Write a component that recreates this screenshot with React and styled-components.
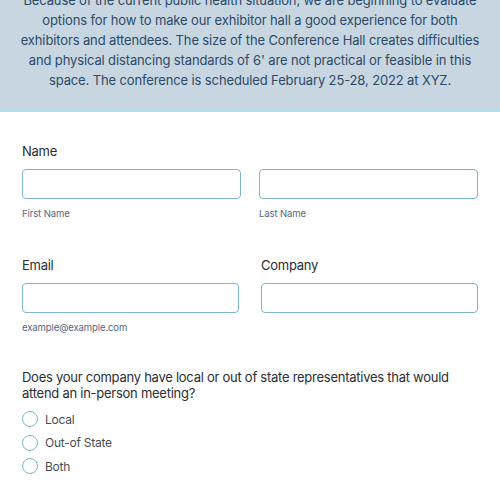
import React from "react";
import styled, { createGlobalStyle } from "styled-components";

const GlobalStyle = createGlobalStyle`
  * {
    box-sizing: border-box;
  }
  body {
    margin: 0;
    background: #ffffff;
    font-family: "Inter", "Noto Sans", sans-serif;
    overflow: hidden;
  }
`;

const Page = styled.div`
  width: 500px;
  height: 484px;
  overflow: hidden;
  background: #ffffff;
`;

/* page is scrolled a bit, so the intro starts above the viewport */
const Intro = styled.header`
  margin-top: -40px;
  padding: 30px 20px 20px;
  background: #c8d6e1;
  border-bottom: 2px solid #b3dcec;
`;

const IntroText = styled.p`
  margin: 0;
  text-align: center;
  font-size: 13px;
  line-height: 20px;
  letter-spacing: -0.01em;
  color: #2c4a68;
`;

const Form = styled.form`
  padding: 29px 22px 0;
  display: flex;
  flex-direction: column;
`;

const Row = styled.div`
  display: grid;
  grid-template-columns: 1fr 1fr;
  column-gap: ${(p) => p.$gap || 18}px;
  margin-bottom: ${(p) => p.$bottom || 0}px;
`;

const Field = styled.div`
  display: flex;
  flex-direction: column;
`;

const Label = styled.label`
  font-size: 13px;
  line-height: 20px;
  height: 20px;
  letter-spacing: -0.02em;
  color: #2a2d33;
  margin-bottom: 8px;
`;

const Input = styled.input`
  height: 30px;
  width: 100%;
  border: 1.5px solid #7db8ca;
  border-radius: 4px;
  background: #ffffff;
  outline: none;
  font-family: inherit;
`;

const SubLabel = styled.span`
  margin-top: 8px;
  font-size: 9.5px;
  line-height: 14px;
  height: 14px;
  letter-spacing: -0.01em;
  color: #526687;
`;

const Question = styled.p`
  margin: 34px 0 10px;
  font-size: 13px;
  line-height: 16px;
  letter-spacing: -0.02em;
  color: #2a2d33;
  max-width: 440px;
`;

const Options = styled.div`
  display: flex;
  flex-direction: column;
  gap: 7.5px;
`;

const Option = styled.label`
  display: flex;
  align-items: center;
  gap: 7px;
  height: 16px;
  font-size: 12px;
  letter-spacing: -0.02em;
  color: #4a4d52;
`;

const Radio = styled.span`
  width: 16px;
  height: 16px;
  border-radius: 50%;
  border: 1.5px solid #7db8ca;
  background: #ffffff;
  flex-shrink: 0;
`;

const App = () => {
  return (
    <Page>
      <GlobalStyle />
      <Intro>
        <IntroText>
          Because of the current public health situation, we are beginning to
          evaluate options for how to make our exhibitor hall a good experience
          for both exhibitors and attendees. The size of the Conference Hall
          creates difficulties and physical distancing standards of 6' are not
          practical or feasible in this space. The conference is scheduled
          February 25-28, 2022 at XYZ.
        </IntroText>
      </Intro>
      <Form>
        <Row $bottom={34}>
          <Field>
            <Label>Name</Label>
            <Input type="text" />
            <SubLabel>First Name</SubLabel>
          </Field>
          <Field>
            <Label />
            <Input type="text" />
            <SubLabel>Last Name</SubLabel>
          </Field>
        </Row>
        <Row $gap={22}>
          <Field>
            <Label>Email</Label>
            <Input type="email" />
            <SubLabel>example@example.com</SubLabel>
          </Field>
          <Field>
            <Label>Company</Label>
            <Input type="text" />
          </Field>
        </Row>
        <Question>
          Does your company have local or out of state representatives that
          would attend an in-person meeting?
        </Question>
        <Options>
          <Option>
            <Radio />
            Local
          </Option>
          <Option>
            <Radio />
            Out-of State
          </Option>
          <Option>
            <Radio />
            Both
          </Option>
        </Options>
      </Form>
    </Page>
  );
};

export default App;
